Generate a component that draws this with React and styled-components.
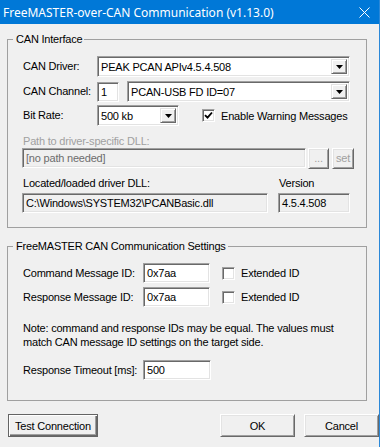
import React from "react";
import styled, { createGlobalStyle } from "styled-components";

const Global = createGlobalStyle`
  html, body { margin: 0; padding: 0; background: #f0f0f0; }
  body { font-family: "Liberation Sans", Arial, sans-serif; font-size: 11px; letter-spacing: -0.2px; color: #000; }
  * { box-sizing: border-box; }
`;

const Window = styled.div`
  width: 380px;
  height: 447px;
  background: #f0f0f0;
  border-right: 1px solid #2b88d8;
  display: flex;
  flex-direction: column;
  overflow: hidden;
`;

const TitleBar = styled.div`
  height: 24px;
  flex: none;
  background: #0078d7;
  color: #fff;
  display: flex;
  align-items: center;
  justify-content: space-between;
  padding: 0 9px 0 3px;
  font-family: "Noto Sans", "Open Sans", sans-serif;
  font-size: 12px;
  letter-spacing: 0;
`;

const Body = styled.div`
  padding: 9px 0 0 7px;
  display: flex;
  flex-direction: column;
`;

const Group = styled.fieldset`
  margin: ${(p) => p.$mt || 0}px 0 0 0;
  width: 360px;
  border: 1px solid #a0a0a0;
  padding: 0;
  min-width: 0;
`;

const GroupContent = styled.div`
  padding: 0 0 ${(p) => p.$pb}px 14px;
  display: flex;
  flex-direction: column;
`;

const Legend = styled.legend`
  margin-left: 5px;
  padding: 0 2px 0 3px;
  line-height: 13px;
  font-size: 11px;
`;

const Row = styled.div`
  display: flex;
  align-items: center;
  height: ${(p) => p.$h || 20}px;
  margin-top: ${(p) => p.$mt || 0}px;
`;

const Label = styled.span`
  flex: none;
  width: ${(p) => (p.$w ? `${p.$w}px` : "auto")};
  padding-left: 1px;
  color: ${(p) => (p.$disabled ? "#a0a0a0" : "#000")};
  white-space: nowrap;
  line-height: 13px;
`;

const TextLine = styled.div`
  margin-top: ${(p) => p.$mt || 0}px;
  padding-left: 1px;
  line-height: ${(p) => p.$lh || 13}px;
  color: ${(p) => (p.$disabled ? "#a0a0a0" : "#000")};
  white-space: nowrap;
`;

const Field = styled.div`
  flex: none;
  width: ${(p) => p.$w}px;
  height: 20px;
  margin-left: ${(p) => p.$ml || 0}px;
  background: ${(p) => (p.$flat ? "#f0f0f0" : "#fff")};
  color: ${(p) => (p.$dim ? "#6d6d6d" : "#000")};
  border-style: solid;
  border-width: 1px;
  border-color: #a0a0a0 #fff #fff #a0a0a0;
  box-shadow: inset 1px 1px 0 #696969, inset -1px -1px 0 #e3e3e3;
  padding: 0 3px;
  display: flex;
  align-items: center;
  white-space: nowrap;
  overflow: hidden;
`;

const Combo = styled.div`
  flex: none;
  width: ${(p) => p.$w}px;
  height: 21px;
  margin-left: ${(p) => p.$ml || 0}px;
  background: #fff;
  border-style: solid;
  border-width: 1px;
  border-color: #a0a0a0 #fff #fff #a0a0a0;
  box-shadow: inset 1px 1px 0 #696969, inset -1px -1px 0 #e3e3e3;
  padding: 2px 2px 2px 3px;
  display: flex;
  align-items: center;
  justify-content: space-between;
  white-space: nowrap;
`;

const DropButton = styled.div`
  flex: none;
  width: 16px;
  height: 15px;
  background: #f0f0f0;
  border-style: solid;
  border-width: 1px;
  border-color: #e3e3e3 #696969 #696969 #e3e3e3;
  box-shadow: inset 1px 1px 0 #fff, inset -1px -1px 0 #a0a0a0;
  display: flex;
  align-items: center;
  justify-content: center;
`;

const Check = styled.div`
  flex: none;
  width: 13px;
  height: 13px;
  margin-left: ${(p) => p.$ml || 0}px;
  margin-right: 6px;
  background: #fff;
  border-style: solid;
  border-width: 1px;
  border-color: #a0a0a0 #fff #fff #a0a0a0;
  box-shadow: inset 1px 1px 0 #696969, inset -1px -1px 0 #e3e3e3;
  display: flex;
  align-items: center;
  justify-content: center;
`;

const Button = styled.div`
  flex: none;
  width: ${(p) => p.$w}px;
  height: ${(p) => p.$h || 23}px;
  margin-left: ${(p) => p.$ml || 0}px;
  background: #f0f0f0;
  color: ${(p) => (p.$disabled ? "#a0a0a0" : "#000")};
  border: 1px solid;
  border-color: ${(p) => (p.$default ? "#646464" : "#fff #696969 #696969 #fff")};
  box-shadow: ${(p) =>
    p.$default
      ? "inset 1px 1px 0 #fff, inset -1px -1px 0 #696969, inset -2px -2px 0 #a0a0a0"
      : "inset 1px 1px 0 #e3e3e3, inset -1px -1px 0 #a0a0a0"};
  display: flex;
  align-items: center;
  justify-content: center;
  white-space: nowrap;
`;

const TwoCol = styled.div`
  display: grid;
  grid-template-columns: 246px 72px;
  column-gap: 10px;
  row-gap: 3px;
  margin-top: 9px;
`;

const ButtonBar = styled.div`
  display: flex;
  align-items: center;
  margin-top: 13px;
  padding-left: 1px;
`;

const Spacer = styled.div`
  flex: 1;
`;

const Arrow = () => (
  <svg width="7" height="4" viewBox="0 0 7 4">
    <path d="M0 0h7L3.5 4z" fill="#000" />
  </svg>
);

const Tick = () => (
  <svg width="9" height="9" viewBox="0 0 9 9">
    <path d="M1 4.2l2.5 2.5L8 1.5" stroke="#000" strokeWidth="1.9" fill="none" />
  </svg>
);

const CloseIcon = () => (
  <svg width="11" height="11" viewBox="0 0 11 11">
    <path d="M0.5 0.5L10.5 10.5M10.5 0.5L0.5 10.5" stroke="#fff" strokeWidth="1" />
  </svg>
);

export default function App() {
  return (
    <>
      <Global />
      <Window>
        <TitleBar>
          <span>FreeMASTER-over-CAN Communication (v1.13.0)</span>
          <CloseIcon />
        </TitleBar>
        <Body>
          <Group>
            <Legend>CAN Interface</Legend>
            <GroupContent $pb={14}>
              <Row $h={21} $mt={10}>
                <Label $w={75}>CAN Driver:</Label>
                <Combo $w={253}>
                  <span>PEAK PCAN APIv4.5.4.508</span>
                  <DropButton><Arrow /></DropButton>
                </Combo>
              </Row>
              <Row $h={21} $mt={4}>
                <Label $w={75}>CAN Channel:</Label>
                <Field $w={22}>1</Field>
                <Combo $w={223} $ml={8}>
                  <span>PCAN-USB FD ID=07</span>
                  <DropButton><Arrow /></DropButton>
                </Combo>
              </Row>
              <Row $h={21} $mt={3}>
                <Label $w={75}>Bit Rate:</Label>
                <Combo $w={82}>
                  <span>500 kb</span>
                  <DropButton><Arrow /></DropButton>
                </Combo>
                <Check $ml={23}><Tick /></Check>
                <span>Enable Warning Messages</span>
              </Row>
              <TextLine $mt={9} $disabled>Path to driver-specific DLL:</TextLine>
              <Row $mt={0}>
                <Field $w={284} $flat $dim>[no path needed]</Field>
                <Button $w={21} $h={21} $ml={2} $disabled>...</Button>
                <Button $w={22} $h={21} $ml={3} $disabled>set</Button>
              </Row>
              <TwoCol>
                <TextLine>Located/loaded driver DLL:</TextLine>
                <TextLine>Version</TextLine>
                <Field $w={246} $flat>C:\Windows\SYSTEM32\PCANBasic.dll</Field>
                <Field $w={72} $flat>4.5.4.508</Field>
              </TwoCol>
            </GroupContent>
          </Group>
          <Group $mt={12}>
            <Legend>FreeMASTER CAN Communication Settings</Legend>
            <GroupContent $pb={20}>
              <Row $mt={10}>
                <Label $w={121}>Command Message ID:</Label>
                <Field $w={67}>0x7aa</Field>
                <Check $ml={12} />
                <span>Extended ID</span>
              </Row>
              <Row $mt={4}>
                <Label $w={121}>Response Message ID:</Label>
                <Field $w={67}>0x7aa</Field>
                <Check $ml={12} />
                <span>Extended ID</span>
              </Row>
              <TextLine $mt={14} $lh={14}>
                Note: command and response IDs may be equal. The values must
                <br />
                match CAN message ID settings on the target side.
              </TextLine>
              <Row $mt={11}>
                <Label $w={121}>Response Timeout [ms]:</Label>
                <Field $w={68}>500</Field>
              </Row>
            </GroupContent>
          </Group>
          <ButtonBar>
            <Button $w={90} $default>Test Connection</Button>
            <Spacer />
            <Button $w={75}>OK</Button>
            <Button $w={75} $ml={9}>Cancel</Button>
          </ButtonBar>
        </Body>
      </Window>
    </>
  );
}
